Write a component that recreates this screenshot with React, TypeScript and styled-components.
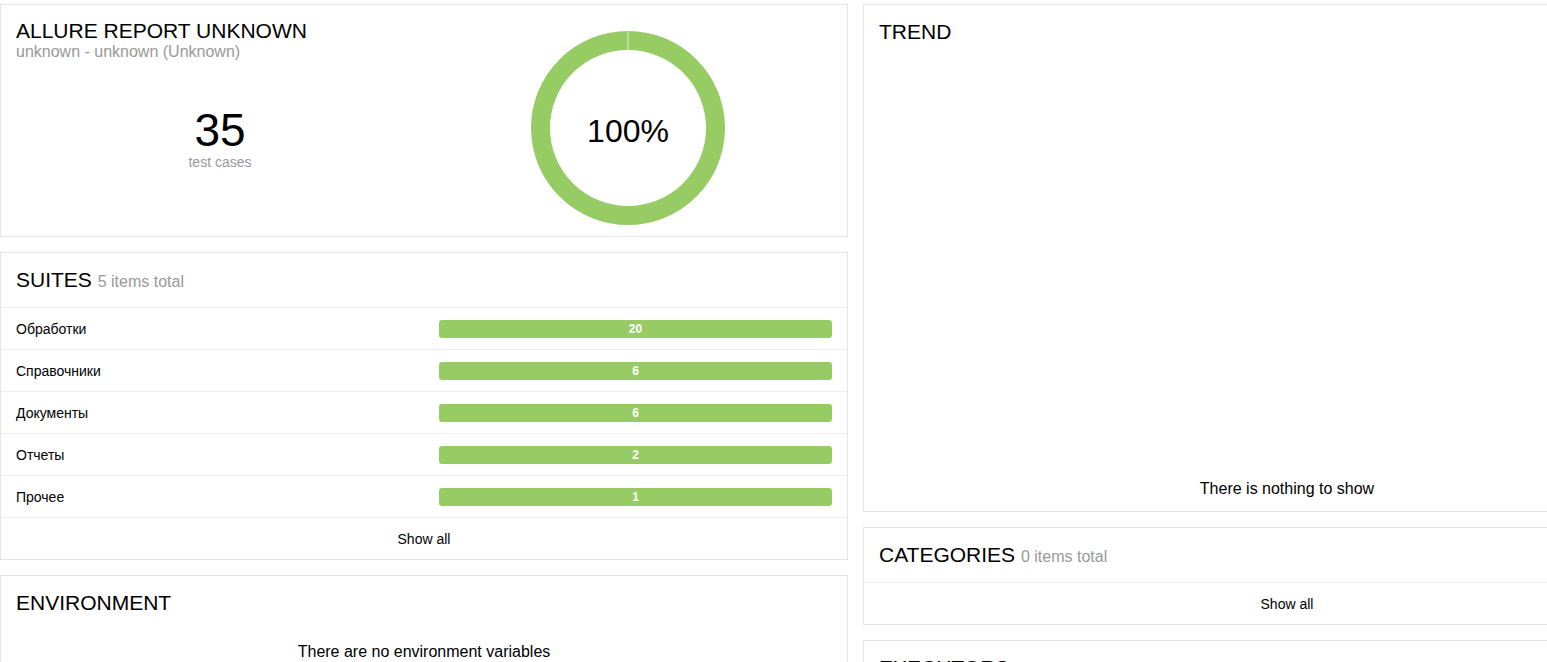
import React from "react";
import styled, { createGlobalStyle } from "styled-components";

const GlobalStyle = createGlobalStyle`
  html, body {
    margin: 0;
    padding: 0;
    background: #fff;
    overflow: hidden;
  }
  body {
    font-family: "Liberation Sans", Arial, sans-serif;
    color: #000;
    font-size: 14px;
  }
  * { box-sizing: border-box; }
`;

const Page = styled.div`
  display: grid;
  grid-template-columns: 848px 848px;
  column-gap: 15px;
  align-items: start;
  padding-top: 4px;
  width: max-content;
`;

const Column = styled.div`
  display: flex;
  flex-direction: column;
  gap: 15px;
`;

const Widget = styled.section`
  border: 1px solid #e5e5e5;
  background: #fff;
`;

const WidgetHeader = styled.div<{ $divided?: boolean }>`
  padding: 15px;
  border-bottom: ${(p) => (p.$divided ? "1px solid #eee" : "none")};
`;

const Title = styled.h2`
  margin: 0;
  font-size: 21px;
  line-height: 24px;
  height: 24px;
  font-weight: normal;
  text-transform: uppercase;
  color: #000;
  white-space: nowrap;
`;

const Count = styled.span`
  font-size: 16px;
  line-height: 1;
  color: #999;
  text-transform: none;
`;

const Overview = styled.div`
  display: grid;
  grid-template-columns: 1fr 1fr;
  padding: 0 15px;
`;

const SummaryCol = styled.div`
  padding-top: 14px;
  display: flex;
  flex-direction: column;
`;

const Subtitle = styled.div`
  font-size: 16px;
  line-height: 18px;
  color: #999;
`;

const Summary = styled.div`
  margin-top: 46px;
  display: flex;
  flex-direction: column;
  align-items: center;
`;

const BigCount = styled.div`
  font-size: 46px;
  line-height: 46px;
  color: #000;
`;

const CountLabel = styled.div`
  margin-top: 3px;
  font-size: 14px;
  line-height: 12px;
  color: #999;
`;

const ChartCol = styled.div`
  display: flex;
  justify-content: center;
  padding: 23px 0 8px;
`;

const SuiteRow = styled.div`
  display: grid;
  grid-template-columns: 1fr 1fr;
  column-gap: 30px;
  align-items: center;
  height: 42px;
  padding: 0 15px;
  border-bottom: 1px solid #eee;
  font-size: 14px;
`;

const Bar = styled.div`
  height: 18px;
  border-radius: 3px;
  background: #97cc64;
  color: #fff;
  font-size: 12px;
  font-weight: bold;
  line-height: 18px;
  text-align: center;
`;

const ShowAll = styled.div`
  height: 41px;
  display: flex;
  align-items: center;
  justify-content: center;
  font-size: 14px;
  color: #000;
  cursor: pointer;
`;

const TrendBody = styled.div`
  height: 452px;
  display: flex;
  align-items: flex-end;
  justify-content: center;
  padding-bottom: 13px;
  font-size: 16px;
  line-height: 18px;
`;

const Placeholder = styled.div`
  padding: 13px 15px 15px;
  text-align: center;
  font-size: 16px;
  line-height: 18px;
`;

const suites = [
  { name: "Обработки", value: 20 },
  { name: "Справочники", value: 6 },
  { name: "Документы", value: 6 },
  { name: "Отчеты", value: 2 },
  { name: "Прочее", value: 1 },
];

const Donut: React.FC = () => (
  <svg width="200" height="200" viewBox="0 0 200 200">
    <circle cx="100" cy="100" r="87.5" fill="none" stroke="#97cc64" strokeWidth="19" />
    <line x1="100" y1="2" x2="100" y2="22" stroke="#fff" strokeOpacity="0.6" strokeWidth="1.2" />
    <text
      x="100"
      y="114"
      textAnchor="middle"
      fontFamily='"Liberation Sans", Arial, sans-serif'
      fontSize="32"
      fill="#000"
    >
      100%
    </text>
  </svg>
);

export default function App() {
  return (
    <>
      <GlobalStyle />
      <Page>
        <Column>
          <Widget>
            <Overview>
              <SummaryCol>
                <Title>Allure Report unknown</Title>
                <Subtitle>unknown - unknown (Unknown)</Subtitle>
                <Summary>
                  <BigCount>35</BigCount>
                  <CountLabel>test cases</CountLabel>
                </Summary>
              </SummaryCol>
              <ChartCol>
                <Donut />
              </ChartCol>
            </Overview>
          </Widget>

          <Widget>
            <WidgetHeader $divided>
              <Title>
                Suites <Count>5 items total</Count>
              </Title>
            </WidgetHeader>
            {suites.map((s) => (
              <SuiteRow key={s.name}>
                <span>{s.name}</span>
                <Bar>{s.value}</Bar>
              </SuiteRow>
            ))}
            <ShowAll>Show all</ShowAll>
          </Widget>

          <Widget>
            <WidgetHeader>
              <Title>Environment</Title>
            </WidgetHeader>
            <Placeholder>There are no environment variables</Placeholder>
          </Widget>
        </Column>

        <Column>
          <Widget>
            <WidgetHeader>
              <Title>Trend</Title>
            </WidgetHeader>
            <TrendBody>There is nothing to show</TrendBody>
          </Widget>

          <Widget>
            <WidgetHeader $divided>
              <Title>
                Categories <Count>0 items total</Count>
              </Title>
            </WidgetHeader>
            <ShowAll>Show all</ShowAll>
          </Widget>

          <Widget>
            <WidgetHeader>
              <Title>Executors</Title>
            </WidgetHeader>
            <Placeholder>There is no information about tests executors</Placeholder>
          </Widget>
        </Column>
      </Page>
    </>
  );
}
